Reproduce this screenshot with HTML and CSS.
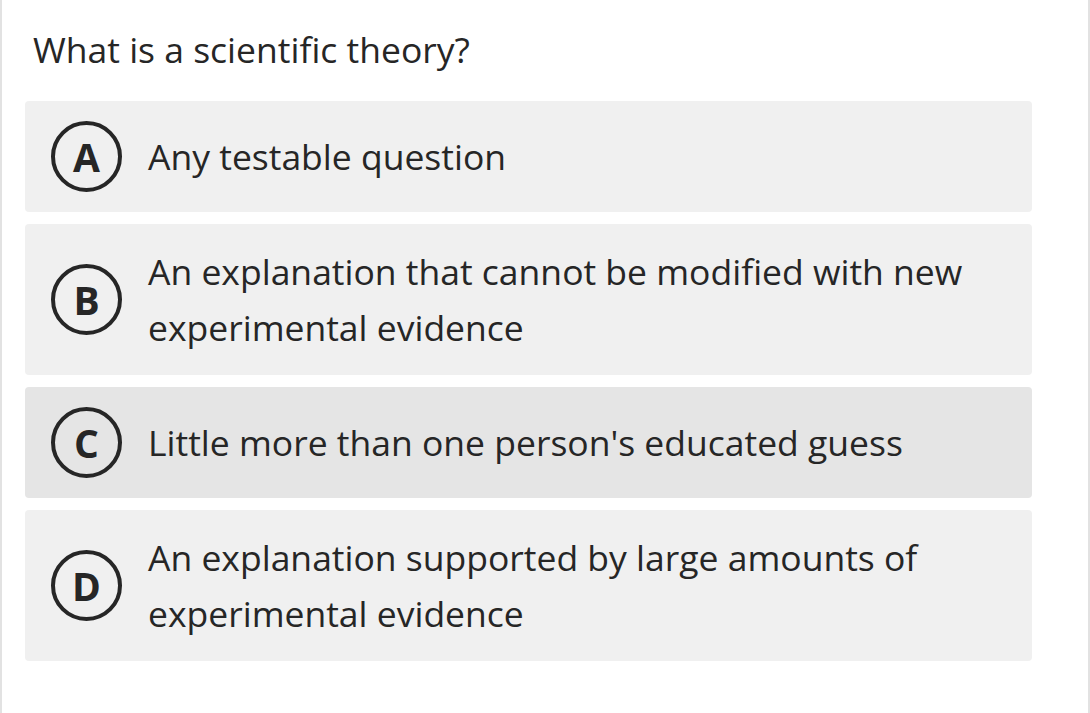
FILE: index.html
```html
<!DOCTYPE html>
<html>
<head>
<meta charset="utf-8">
<link rel="stylesheet" href="styles.css">
</head>
<body>
<div class="page">
  <h1 class="question">What is a scientific theory?</h1>
  <div class="options">
    <div class="option">
      <span class="badge">A</span>
      <span class="text">Any testable question</span>
    </div>
    <div class="option">
      <span class="badge">B</span>
      <span class="text">An explanation that cannot be modified with new experimental evidence</span>
    </div>
    <div class="option hover">
      <span class="badge">C</span>
      <span class="text">Little more than one person's educated guess</span>
    </div>
    <div class="option">
      <span class="badge">D</span>
      <span class="text">An explanation supported by large amounts of experimental evidence</span>
    </div>
  </div>
</div>
</body>
</html>
```

FILE: styles.css
```css
html, body {
  margin: 0;
  padding: 0;
  background: #fff;
}
.page {
  box-sizing: border-box;
  width: 1090px;
  height: 713px;
  border-left: 2px solid #e2e2e2;
  border-right: 2px solid #e2e2e2;
  padding: 24px 0 0 23px;
  font-family: "Open Sans", "Liberation Sans", sans-serif;
  color: #262626;
}
.question {
  margin: 0 0 0 8px;
  font-size: 35.5px;
  font-weight: 400;
  line-height: 50px;
}
.options {
  margin-top: 27px;
  width: 1007px;
  display: flex;
  flex-direction: column;
  gap: 12px;
}
.option {
  display: flex;
  align-items: center;
  gap: 26px;
  background: #f0f0f0;
  border-radius: 4px;
  padding: 20px 25px 20px 26px;
  min-height: 71px;
}
.option.hover {
  background: #e5e5e5;
}
.badge {
  flex: none;
  box-sizing: border-box;
  width: 71px;
  height: 71px;
  border: 4px solid #262626;
  border-radius: 50%;
  display: flex;
  align-items: center;
  justify-content: center;
  font-size: 39px;
  font-weight: 700;
  line-height: 1;
}
.text {
  font-size: 35.5px;
  line-height: 55.5px;
  max-width: 860px;
}
```
